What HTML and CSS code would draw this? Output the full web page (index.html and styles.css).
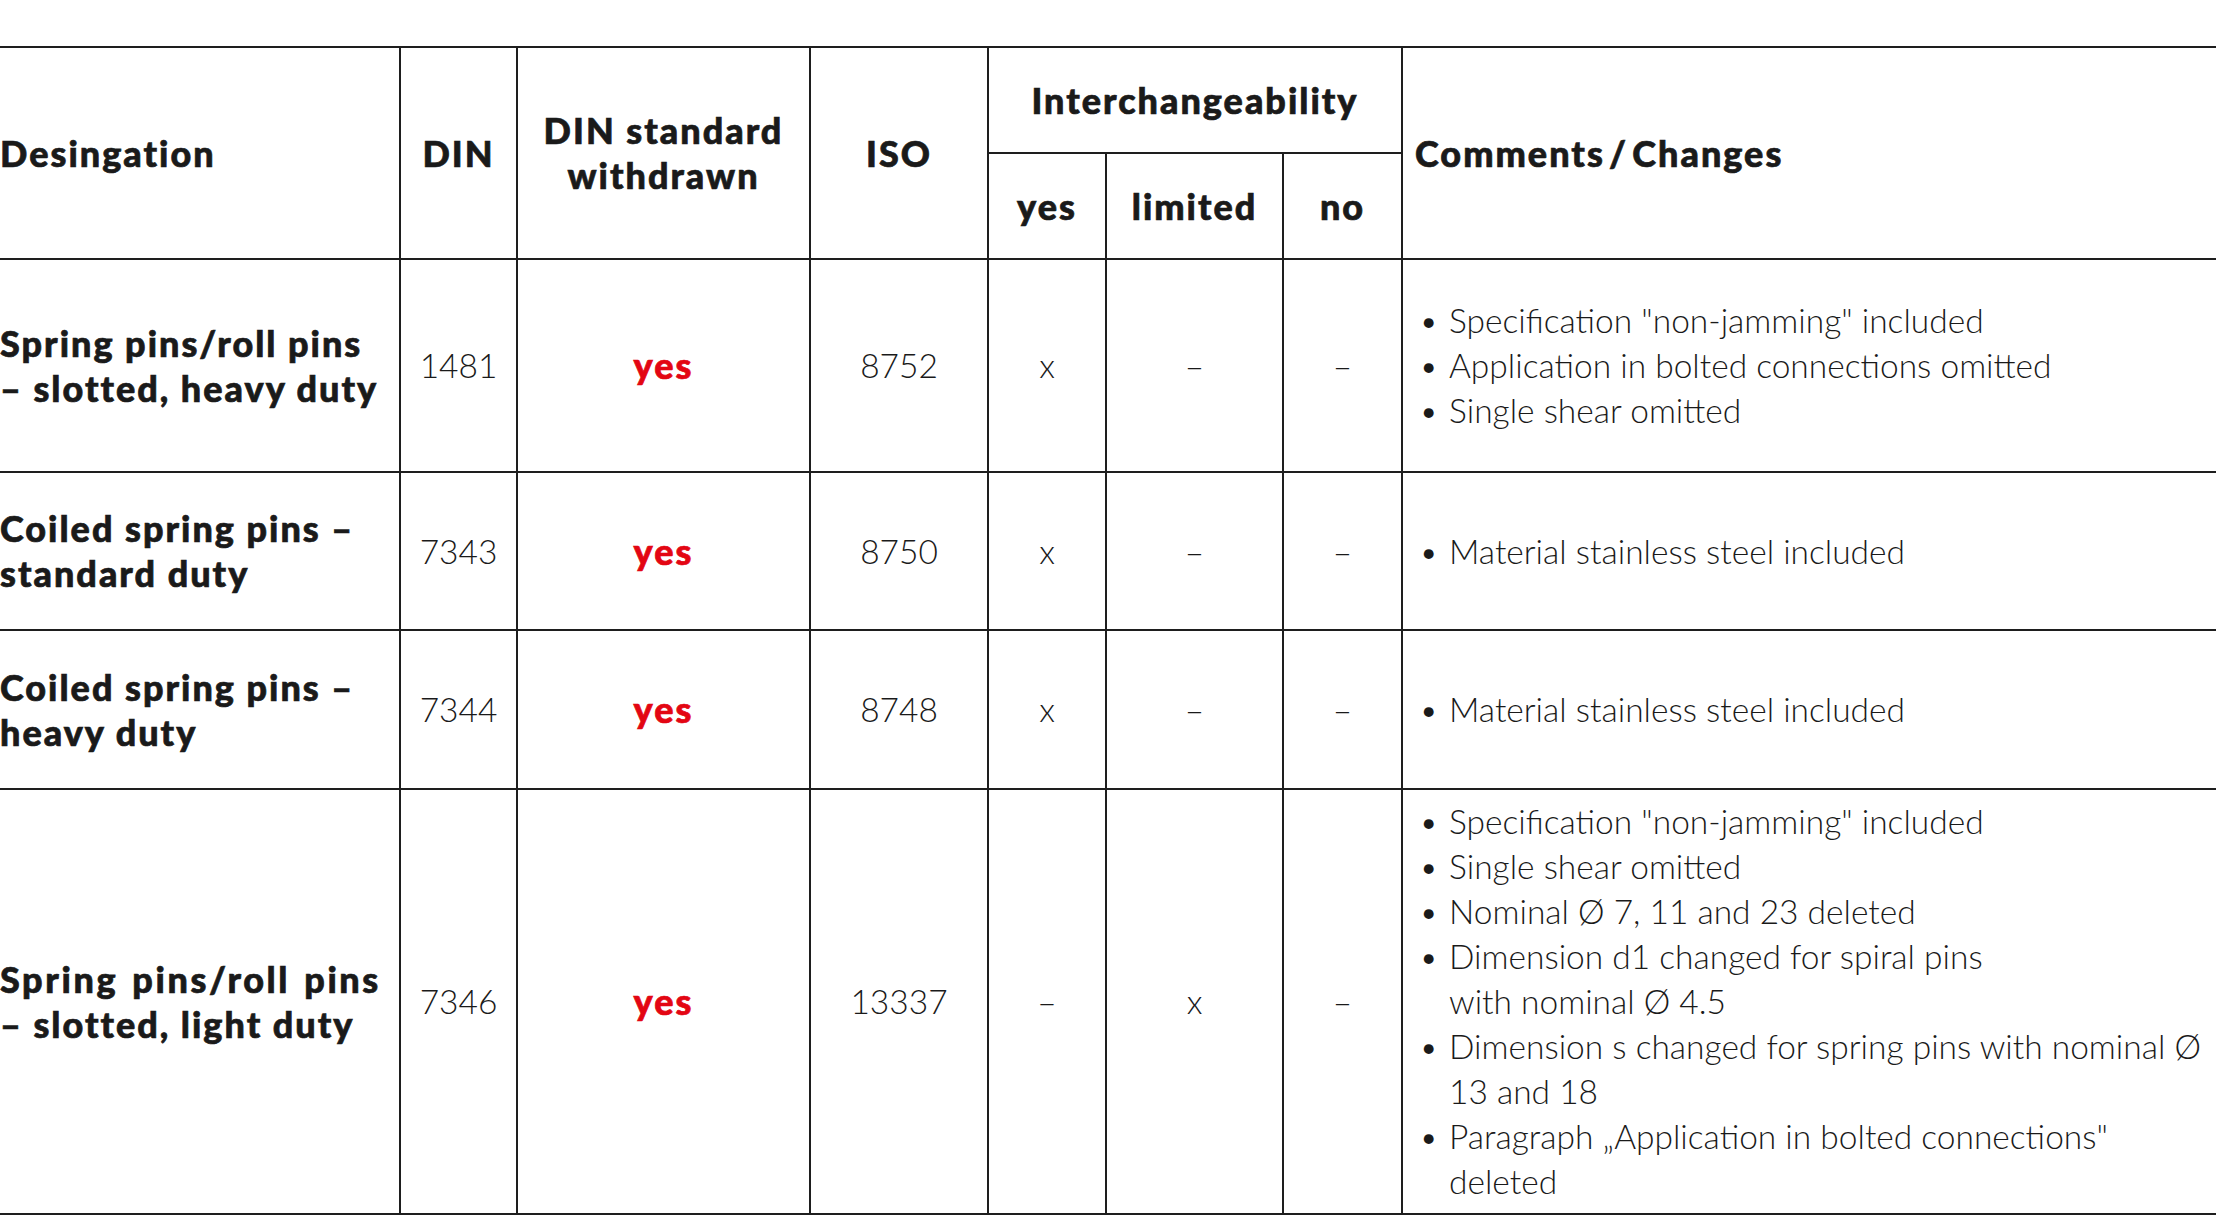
FILE: index.html
```html
<!DOCTYPE html>
<html lang="en">
<head>
<meta charset="utf-8">
<title>Spring pins – DIN / ISO</title>
<link rel="stylesheet" href="styles.css">
</head>
<body>
<table class="spec">
  <colgroup>
    <col class="c-des"><col class="c-din"><col class="c-wd"><col class="c-iso">
    <col class="c-yes"><col class="c-lim"><col class="c-no"><col class="c-cmt">
  </colgroup>
  <thead>
    <tr class="h-top">
      <th rowspan="2" class="des">Desingation</th>
      <th rowspan="2">DIN</th>
      <th rowspan="2">DIN standard<br>withdrawn</th>
      <th rowspan="2">ISO</th>
      <th colspan="3">Interchangeability</th>
      <th rowspan="2" class="cmt">Comments&#8202;/&#8202;Changes</th>
    </tr>
    <tr class="h-sub">
      <th>yes</th><th>limited</th><th>no</th>
    </tr>
  </thead>
  <tbody>
    <tr class="r1">
      <td class="des">Spring pins/roll pins<br>– slotted, heavy duty</td>
      <td>1481</td>
      <td class="red">yes</td>
      <td>8752</td>
      <td>x</td><td>–</td><td>–</td>
      <td class="cmt"><ul>
        <li>Specification "non-jamming" included</li>
        <li>Application in bolted connections omitted</li>
        <li>Single shear omitted</li>
      </ul></td>
    </tr>
    <tr class="r2">
      <td class="des">Coiled spring pins –<br>standard duty</td>
      <td>7343</td>
      <td class="red">yes</td>
      <td>8750</td>
      <td>x</td><td>–</td><td>–</td>
      <td class="cmt"><ul><li>Material stainless steel included</li></ul></td>
    </tr>
    <tr class="r3">
      <td class="des">Coiled spring pins –<br>heavy duty</td>
      <td>7344</td>
      <td class="red">yes</td>
      <td>8748</td>
      <td>x</td><td>–</td><td>–</td>
      <td class="cmt"><ul><li>Material stainless steel included</li></ul></td>
    </tr>
    <tr class="r4">
      <td class="des"><span class="wide">Spring pins/roll pins</span><br>– slotted, light duty</td>
      <td>7346</td>
      <td class="red">yes</td>
      <td>13337</td>
      <td>–</td><td>x</td><td>–</td>
      <td class="cmt"><ul>
        <li>Specification "non-jamming" included</li>
        <li>Single shear omitted</li>
        <li>Nominal Ø 7, 11 and 23 deleted</li>
        <li>Dimension d1 changed for spiral pins<br>with nominal Ø 4.5</li>
        <li>Dimension s changed for spring pins with nominal Ø<br>13 and 18</li>
        <li>Paragraph „Application in bolted connections"<br>deleted</li>
      </ul></td>
    </tr>
  </tbody>
</table>
</body>
</html>
```
FILE: styles.css
```css
html, body {
  margin: 0;
  padding: 0;
  background: #ffffff;
  overflow: hidden;
}

body {
  font-family: "Lato", "Noto Sans", sans-serif;
  color: #1a1a1a;
}

.spec {
  margin-top: 46px;
  width: 2216px;
  table-layout: fixed;
  border-collapse: collapse;
  font-size: 33.5px;
  line-height: 45px;
}

.c-des { width: 400px; }
.c-din { width: 117px; }
.c-wd  { width: 293px; }
.c-iso { width: 178px; }
.c-yes { width: 118px; }
.c-lim { width: 177px; }
.c-no  { width: 119px; }
.c-cmt { width: 814px; }

.spec th,
.spec td {
  border: 2px solid #1e1e1e;
  padding: 0;
  text-align: center;
  vertical-align: middle;
  white-space: nowrap;
}

.spec td {
  font-weight: 300;
}

.spec th,
.spec .des,
.spec .red {
  font-weight: 900;
  font-size: 36px;
  letter-spacing: 2px;
  -webkit-text-stroke: 0.7px currentColor;
}

.spec tr > :first-child { border-left: none; }
.spec tr > .cmt { border-right: none; }

.spec .des {
  text-align: left;
}

.spec .cmt {
  text-align: left;
  padding-left: 12px;
}

.spec .red {
  color: #e30613;
}

.wide { letter-spacing: 2.6px; word-spacing: 3px; }

.h-top { height: 106px; }
.h-sub { height: 106px; }
.r1 { height: 213px; }
.r2 { height: 158px; }
.r3 { height: 159px; }
.r4 { height: 425px; }

.cmt ul {
  list-style: none;
  margin: 0;
  padding: 0;
}

.cmt li {
  padding-left: 34px;
  text-indent: -34px;
}

.cmt li::before {
  content: "•";
  display: inline-block;
  width: 34px;
  text-indent: 0;
  padding-left: 4px;
  box-sizing: border-box;
}
```
